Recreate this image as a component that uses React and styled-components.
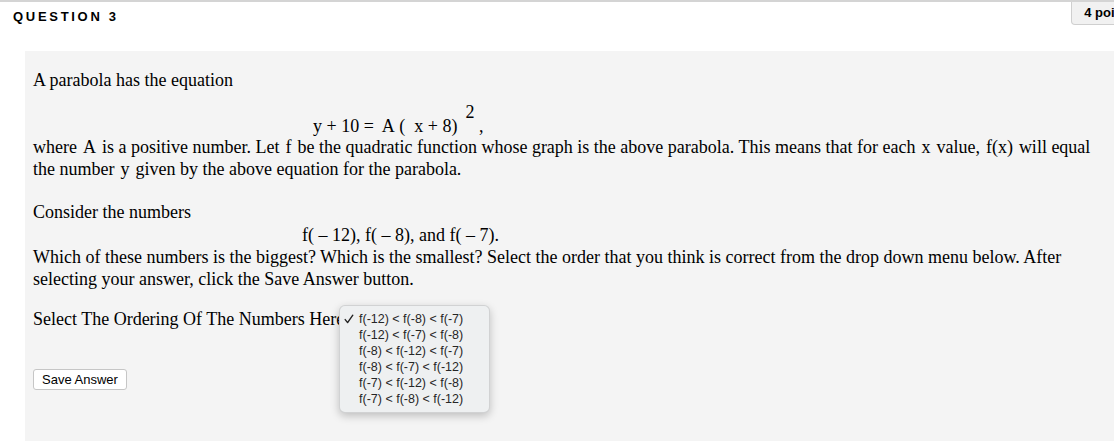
import * as React from "react";
import styled, { createGlobalStyle } from "styled-components";

const Global = createGlobalStyle`
  html, body {
    margin: 0;
    padding: 0;
    background: #fff;
    overflow: hidden;
  }
`;

const options = [
  "f(-12) < f(-8) < f(-7)",
  "f(-12) < f(-7) < f(-8)",
  "f(-8) < f(-12) < f(-7)",
  "f(-8) < f(-7) < f(-12)",
  "f(-7) < f(-12) < f(-8)",
  "f(-7) < f(-8) < f(-12)",
];

const App = () => {
  return (
    <Page>
      <Global />
      <Header>
        <Title>QUESTION 3</Title>
        <Points>4 points</Points>
      </Header>
      <Panel>
        <Para>A parabola has the equation</Para>
        <Equation indent={280}>
          y + 10 =&nbsp; A&nbsp;(&nbsp; x + 8)<Sup>2</Sup>&nbsp;,
        </Equation>
        <Para>
          where <Var>A</Var> is a positive number. Let <Var>f</Var> be the
          quadratic function whose graph is the above parabola. This means that
          for each <Var>x</Var> value, <Var>f(x)</Var> will equal the number{" "}
          <Var>y</Var> given by the above equation for the parabola.
        </Para>
        <Para gap={21}>Consider the numbers</Para>
        <Indented indent={269}>f( – 12), f( – 8), and f( – 7).</Indented>
        <Para>
          Which of these numbers is the biggest? Which is the smallest? Select
          the order that you think is correct from the drop down menu below.
          After selecting your answer, click the Save Answer button.
        </Para>
        <SelectRow>
          Select The Ordering Of The Numbers Here
          <Menu>
            {options.map((o, i) => (
              <MenuItem key={o}>
                <Check>
                  {i === 0 && (
                    <svg width="10" height="10" viewBox="0 0 10 10">
                      <path
                        d="M1.2 5.6 L3.6 8.6 L8.8 1.2"
                        fill="none"
                        stroke="#222"
                        strokeWidth="1.4"
                        strokeLinecap="round"
                        strokeLinejoin="round"
                      />
                    </svg>
                  )}
                </Check>
                <span>{o}</span>
              </MenuItem>
            ))}
          </Menu>
        </SelectRow>
        <SaveButton>Save Answer</SaveButton>
      </Panel>
    </Page>
  );
};

export default App;

const Page = styled.div`
  width: 1114px;
  height: 441px;
  overflow: hidden;
  border-top: 2px solid #d4d4d4;
  box-sizing: border-box;
  display: flex;
  flex-direction: column;
`;

const Header = styled.div`
  display: flex;
  align-items: flex-start;
  height: 49px;
  flex-shrink: 0;
`;

const Title = styled.h2`
  margin: 0;
  padding: 7px 0 0 13px;
  font-family: "Liberation Sans", Arial, sans-serif;
  font-size: 13px;
  font-weight: bold;
  letter-spacing: 2.7px;
  color: #000;
`;

const Points = styled.div`
  margin-left: auto;
  margin-right: -33px;
  flex-shrink: 0;
  white-space: nowrap;
  height: 23px;
  box-sizing: border-box;
  padding: 3px 12px 0 12px;
  background: #f1f1f1;
  border: 1px solid #cfcfcf;
  border-top: none;
  border-radius: 0 0 0 4px;
  font-family: "Liberation Sans", Arial, sans-serif;
  font-size: 13px;
  font-weight: bold;
  color: #000;
`;

const Panel = styled.div`
  flex: 1;
  margin-left: 25px;
  padding: 18px 0 0 8px;
  background: #f4f4f4;
  font-family: "Liberation Serif", "Times New Roman", serif;
  font-size: 18px;
  line-height: 22px;
  color: #000;
`;

const Para = styled.p`
  margin: ${(p) => p.gap || 0}px 0 0 0;
`;

const Var = styled.span`
  margin: 0 1.5px;
`;

const Equation = styled.div`
  margin: 26px 0 0 ${(p) => p.indent}px;
  line-height: 19px;
  white-space: nowrap;
`;

const Sup = styled.span`
  position: relative;
  top: -14px;
  margin-left: 8px;
  line-height: 0;
`;

const Indented = styled.div`
  margin: 1px 0 0 ${(p) => p.indent}px;
`;

const SelectRow = styled.div`
  position: relative;
  margin-top: 18px;
  white-space: nowrap;
`;

const Menu = styled.div`
  position: absolute;
  left: 306px;
  top: -3px;
  width: 151px;
  box-sizing: border-box;
  padding: 5px 0 5px 0;
  background: #eef0f1;
  border: 1px solid rgba(0, 0, 0, 0.12);
  border-radius: 6px;
  box-shadow: 0 3px 9px rgba(0, 0, 0, 0.22);
  font-family: "Liberation Sans", Arial, sans-serif;
  font-size: 12.5px;
  line-height: 16px;
  color: #262626;
`;

const MenuItem = styled.div`
  display: flex;
  align-items: center;
  padding-left: 4px;
`;

const Check = styled.span`
  flex: 0 0 15px;
  display: flex;
  align-items: center;
`;

const SaveButton = styled.button`
  display: block;
  margin-top: 39px;
  height: 21px;
  padding: 0 8px;
  background: #fff;
  border: 1px solid #c6c6c6;
  border-radius: 3px;
  font-family: "Liberation Sans", Arial, sans-serif;
  font-size: 13px;
  color: #000;
`;
